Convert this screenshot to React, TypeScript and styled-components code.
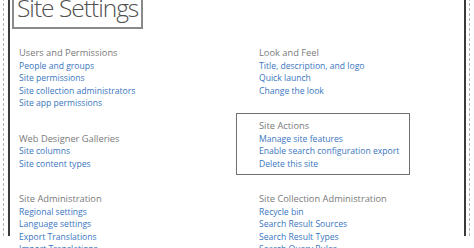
import React, { FC } from 'react';
import styled, { createGlobalStyle } from 'styled-components';

const COLORS = {
  frame: '#3a3a3a',
  dashed: '#b4b4b4',
  titleBorder: '#8a8a8a',
  title: '#505050',
  header: '#7a7a7a',
  link: '#3a76c0',
  boxBorder: '#707070',
};

interface sectionInterface {
  title: string;
  links: string[];
  boxed?: boolean;
  gap?: number;
};

const GlobalStyle = createGlobalStyle`
  html, body {
    margin: 0;
    padding: 0;
    background: #fff;
  }
  body {
    font-family: 'Open Sans', 'Noto Sans', 'Liberation Sans', sans-serif;
  }
`;

const Section: FC<sectionInterface> = ({ title, links, boxed, gap = 0 }) => {
  return (
    <StyledSection $boxed={boxed} $gap={gap}>
      <SectionTitle>{title}</SectionTitle>
      {links.map((link) => (
        <SectionLink key={link} href="#">{link}</SectionLink>
      ))}
    </StyledSection>
  );
};

const App: FC = () => {
  return (
    <>
      <GlobalStyle />
      <Page>
        <DashedFrame>
          <SolidFrame>
            <TitleBox>
              <PageTitle>Site Settings</PageTitle>
            </TitleBox>
            <Columns>
              <Column>
                <Section
                  title="Users and Permissions"
                  links={[
                    'People and groups',
                    'Site permissions',
                    'Site collection administrators',
                    'Site app permissions',
                  ]}
                />
                <Section
                  gap={23}
                  title="Web Designer Galleries"
                  links={['Site columns', 'Site content types']}
                />
                <Section
                  gap={23}
                  title="Site Administration"
                  links={[
                    'Regional settings',
                    'Language settings',
                    'Export Translations',
                    'Import Translations',
                  ]}
                />
              </Column>
              <Column>
                <Section
                  title="Look and Feel"
                  links={['Title, description, and logo', 'Quick launch', 'Change the look']}
                />
                <Section
                  boxed
                  gap={16}
                  title="Site Actions"
                  links={[
                    'Manage site features',
                    'Enable search configuration export',
                    'Delete this site',
                  ]}
                />
                <Section
                  gap={18}
                  title="Site Collection Administration"
                  links={[
                    'Recycle bin',
                    'Search Result Sources',
                    'Search Result Types',
                    'Search Query Rules',
                  ]}
                />
              </Column>
            </Columns>
          </SolidFrame>
        </DashedFrame>
      </Page>
    </>
  );
};

const Page = styled.div`
  height: 248px;
  overflow: hidden;
  padding: 0 4px 0 3px;
`;

const DashedFrame = styled.div`
  height: 100%;
  padding: 0 3px 0 4px;
  border-left: 1px dashed ${COLORS.dashed};
  border-right: 1px dashed ${COLORS.dashed};
`;

const SolidFrame = styled.div`
  height: 100%;
  padding-left: 2px;
  border-left: 2px solid ${COLORS.frame};
  border-right: 2px solid ${COLORS.frame};
`;

const TitleBox = styled.div`
  display: flex;
  align-items: flex-end;
  margin-top: -12px;
  width: 127px;
  height: 37px;
  border: 2px solid ${COLORS.titleBorder};
`;

const PageTitle = styled.h1`
  margin: 0 0 4px 3px;
  font-size: 24.5px;
  font-weight: 300;
  line-height: 30px;
  letter-spacing: -1px;
  color: ${COLORS.title};
  white-space: nowrap;
`;

const Columns = styled.div`
  display: grid;
  grid-template-columns: 217px 1fr;
  margin-top: 18px;
  padding-left: 7px;
`;

const Column = styled.div`
  display: flex;
  flex-direction: column;
  align-items: flex-start;
`;

const StyledSection = styled.div<{ $boxed?: boolean; $gap: number }>`
  display: flex;
  flex-direction: column;
  box-sizing: border-box;
  width: ${(p) => (p.$boxed ? '174px' : 'auto')};
  margin-top: ${(p) => p.$gap}px;
  padding: ${(p) => (p.$boxed ? '6px 0 4px 22px' : '0 0 0 23px')};
  border: ${(p) => (p.$boxed ? `1.5px solid ${COLORS.boxBorder}` : 'none')};

  ${Column}:first-child & {
    padding-left: 0;
  }
`;

const SectionTitle = styled.div`
  font-size: 9.3px;
  line-height: 12.5px;
  color: ${COLORS.header};
  white-space: nowrap;
`;

const SectionLink = styled.a`
  font-size: 8.6px;
  line-height: 12.5px;
  color: ${COLORS.link};
  text-decoration: none;
  white-space: nowrap;
`;

export default App;
